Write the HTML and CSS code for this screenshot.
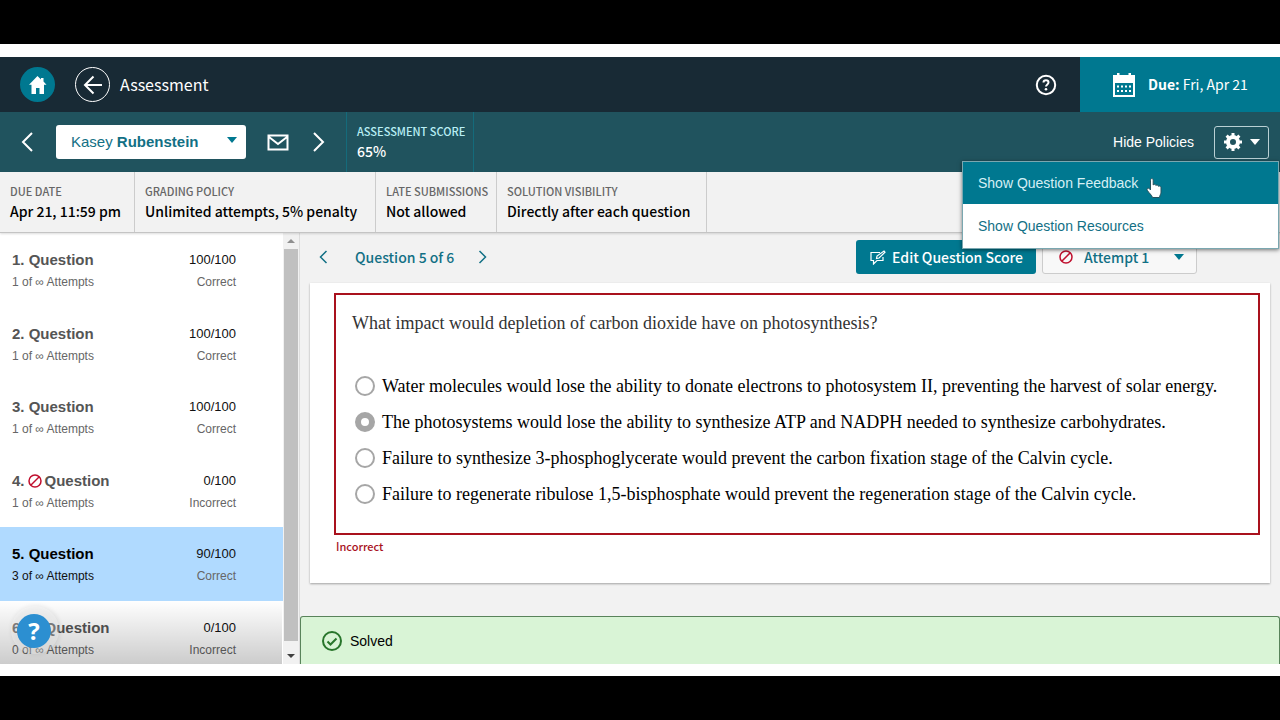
FILE: index.html
```html
<!DOCTYPE html>
<html lang="en">
  <head>
    <meta charset="UTF-8">
    <meta name="viewport" content="width=device-width">
    <title>Assessment</title>
    <link rel="stylesheet" href="styles.css">
  </head>
  <body>
    <div class="app">
      <header class="top">
        <a href="#" class="home" aria-label="Home"><svg width="20" height="20" viewBox="0 0 20 20"><path fill="#fff" d="M9.500 1 1 9.800h2.500V19H8v-6h3.500v6H16V9.800h2.500L15.500 6.500V3H13v1.400z"/></svg></a>
        <a href="#" class="back" aria-label="Back"><svg width="20" height="20" viewBox="0 0 20 20"><path class="line" d="M19 10H2M10.500 1.500 2 10l8.500 8.500"/></svg></a>
        <h1>Assessment</h1>
        <button class="icon help" aria-label="Help"><svg width="22" height="22" viewBox="0 0 22 22"><circle class="line" cx="11" cy="11" r="9.200"/><path class="line" d="M8.500 8.600c0-3.100 5-3.100 5 0 0 1.800-2.500 1.900-2.500 4"/><circle fill="#fff" cx="11" cy="15.300" r="1.300"/></svg></button>
        <div class="due">
          <svg width="22" height="24" viewBox="0 0 22 24"><path fill="#fff" d="M4 0h2.500v2h9V0H18v2h4v22H0V2h4z"/><path fill="#007890" d="M2 10h18v12H2z"/><path stroke="#fff" stroke-width="2" stroke-dasharray="2 2" d="M4 13.500h14M4 18h14"/></svg>
          <span><b>Due:</b> Fri, Apr 21</span>
        </div>
      </header>
      <div class="student">
        <button class="icon prev" aria-label="Previous student"><svg width="14" height="22" viewBox="0 0 14 22"><path class="line" d="M11 2 2 11l9 9"/></svg></button>
        <label class="pick who">
          <select aria-label="Student"><option>Kasey Rubenstein</option></select>
          <span>Kasey <b>Rubenstein</b></span>
        </label>
        <button class="icon mail" aria-label="Email student"><svg width="22" height="17" viewBox="0 0 22 17"><path class="line" d="M1.500 1.500h19v14h-19zM2 3l9 7 9-7"/></svg></button>
        <button class="icon next" aria-label="Next student"><svg width="14" height="22" viewBox="0 0 14 22"><path class="line" d="m2 2 9 9-9 9"/></svg></button>
        <div class="score"><h2>ASSESSMENT SCORE</h2><p>65%</p></div>
        <button class="icon hide">Hide Policies</button>
        <div class="settings">
          <button class="gear" aria-label="Settings" aria-expanded="true"><svg width="18" height="18" viewBox="0 0 18 18"><circle cx="9" cy="9" r="5" fill="none" stroke="#fff" stroke-width="4"/><path stroke="#fff" stroke-width="3" d="M9 0v3M9 15v3M0 9h3M15 9h3M2.600 2.600l2 2M13.400 13.400l2 2M2.600 15.400l2-2M13.400 4.600l2-2"/></svg><svg width="10" height="6" viewBox="0 0 10 6"><path fill="#fff" d="M0 0h10L5 6z"/></svg></button>
          <div class="menu" role="menu">
            <button role="menuitem" class="on">Show Question Feedback</button>
            <button role="menuitem">Show Question Resources</button>
            <svg class="hand" width="16" height="21" viewBox="0 0 16 21"><path fill="#fff" stroke="#27515c" stroke-width="1" d="M4.500 12V2.200c0-2.200 2.700-2.200 2.700 0V7c.6-1 2.400-.9 2.700.5.8-.8 2.300-.5 2.500.8 1-.7 2.600-.1 2.600 1.400v4.500c0 1.800-1.200 2.900-1.500 5.300H6.500c-.6-2.500-3.500-4.300-5.300-7.300-1-1.700 1.300-2.700 2.300-1.500z"/></svg>
          </div>
        </div>
      </div>
      <dl class="policies">
        <div><dt>DUE DATE</dt><dd>Apr 21, 11:59 pm</dd></div>
        <div><dt>GRADING POLICY</dt><dd>Unlimited attempts, 5% penalty</dd></div>
        <div><dt>LATE SUBMISSIONS</dt><dd>Not allowed</dd></div>
        <div><dt>SOLUTION VISIBILITY</dt><dd>Directly after each question</dd></div>
      </dl>
      <div class="work">
        <nav class="side">
          <ol class="list">
            <li><a href="#"><b>1. Question</b><span>100/100</span><small>1 of ∞ Attempts</small><small>Correct</small></a></li>
            <li><a href="#"><b>2. Question</b><span>100/100</span><small>1 of ∞ Attempts</small><small>Correct</small></a></li>
            <li><a href="#"><b>3. Question</b><span>100/100</span><small>1 of ∞ Attempts</small><small>Correct</small></a></li>
            <li><a href="#"><b>4. <svg class="no" width="14" height="14" viewBox="0 0 14 14"><circle cx="7" cy="7" r="6"/><path d="m3 11 8-8"/></svg> Question</b><span>0/100</span><small>1 of ∞ Attempts</small><small>Incorrect</small></a></li>
            <li class="current"><a href="#"><b>5. Question</b><span>90/100</span><small>3 of ∞ Attempts</small><small>Correct</small></a></li>
            <li><a href="#"><b>6. <svg class="no" width="14" height="14" viewBox="0 0 14 14"><circle cx="7" cy="7" r="6"/><path d="m3 11 8-8"/></svg> Question</b><span>0/100</span><small>0 of ∞ Attempts</small><small>Incorrect</small></a></li>
          </ol>
          <div class="bar">
            <svg width="8" height="4" viewBox="0 0 8 4"><path fill="#8f8f8f" d="M0 4h8L4 0z"/></svg>
            <i></i>
            <svg width="8" height="4" viewBox="0 0 8 4"><path fill="#404040" d="M0 0h8L4 4z"/></svg>
          </div>
          <button class="support" aria-label="Support">?</button>
        </nav>
        <main>
          <div class="tools">
            <button class="icon" aria-label="Previous question"><svg width="9" height="14" viewBox="0 0 9 14"><path class="line" d="M7.500 1 1.500 7l6 6"/></svg></button>
            <h2>Question 5 of 6</h2>
            <button class="icon" aria-label="Next question"><svg width="9" height="14" viewBox="0 0 9 14"><path class="line" d="m1.500 1 6 6-6 6"/></svg></button>
            <button class="edit"><svg width="16" height="15" viewBox="0 0 16 15"><path class="line" d="M10 2.500H1v8h2.500V14l3.500-3.500h6V7M6.500 8.500l.5-2.500 7-5 1 1.300-6 5.700z"/></svg>Edit Question Score</button>
            <label class="pick attempt">
              <select aria-label="Attempt"><option>Attempt 1</option></select>
              <svg class="no" width="14" height="14" viewBox="0 0 14 14"><circle cx="7" cy="7" r="6"/><path d="m3 11 8-8"/></svg>
            </label>
          </div>
          <section class="card">
            <fieldset>
              <p>What impact would depletion of carbon dioxide have on photosynthesis?</p>
              <label><input type="radio" name="a">Water molecules would lose the ability to donate electrons to photosystem II, preventing the harvest of solar energy.</label>
              <label><input type="radio" name="a" checked>The photosystems would lose the ability to synthesize ATP and NADPH needed to synthesize carbohydrates.</label>
              <label><input type="radio" name="a">Failure to synthesize 3-phosphoglycerate would prevent the carbon fixation stage of the Calvin cycle.</label>
              <label><input type="radio" name="a">Failure to regenerate ribulose 1,5-bisphosphate would prevent the regeneration stage of the Calvin cycle.</label>
            </fieldset>
            <p class="result">Incorrect</p>
          </section>
          <div class="solved"><svg width="20" height="20" viewBox="0 0 20 20"><circle cx="10" cy="10" r="9"/><path d="m5.500 10.500 3 3 6-6"/></svg>Solved</div>
        </main>
      </div>
    </div>
  </body>
</html>
```
FILE: styles.css
```css
* {box-sizing: border-box;}
body {color: #000; background: #000; margin: 0; height: 100vh;
  padding: 44px 0; font: 14px/20px 'Noto Sans CJK SC', sans-serif;}
h1, h2, p, dl, dd, ol {margin: 0; padding: 0; font-weight: 400;}
a {text-decoration: none; color: inherit;}
svg {display: block; flex: none;}
button, select {font: inherit; cursor: pointer;}
button {border: 0; padding: 0;}
.line {fill: none; stroke: currentColor; stroke-width: 2;}
.icon {color: inherit; background: none; display: flex;}
.app {background: #fff; height: 100%; padding: 13px 0 12px;
  display: flex; flex-flow: column;}

.top {color: #fff; background: #182a35; height: 55px; flex: none;
  padding-left: 20px; display: flex; align-items: center;}
.home, .back {width: 35px; height: 35px; border-radius: 50%;
  display: flex; align-items: center; justify-content: center;}
.home {background: #007890;}
.back {border: 1px solid #fff; margin: 0 10px 0 20px;}
h1 {font-size: 16px; padding-bottom: 2px;}
.help {margin: 0 23px 0 auto;}
.due {background: #007890; width: 200px; align-self: stretch;
  padding-left: 33px; display: flex; align-items: center; gap: 13px;}
.due span {padding-bottom: 2px;}

.student {color: #fff; background: #20535e; height: 60px; flex: none;
  padding: 0 11px 0 21px; display: flex; align-items: center;}
.pick {display: grid; align-items: center;}
.pick > * {grid-area: 1 / 1;}
.pick select {appearance: none; border-radius: 3px; height: 34px;}
.pick::after {content: ''; grid-area: 1 / 1; justify-self: end;
  border: 5px solid #0000; border-top: 6px solid #007890; border-bottom: 0;
  pointer-events: none;}
.who {width: 190px; margin: 0 21px;
  font: 15px/20px 'Liberation Sans', sans-serif;}
.who select {color: #0000; background: #fff; border: 0; width: 100%;}
.who span {color: #127085; padding-left: 15px; pointer-events: none;}
.who::after {margin: 0 9px 4px;}
.next {margin: 0 20px 0 23px;}
.score {border: solid #146b7b; border-width: 0 1px; align-self: stretch;
  padding: 9px 8px 9px 10px;}
.score h2 {color: #b9eff5; font-size: 11px; font-weight: 500;}
.score p {font-weight: 500;}
.hide {margin: 0 20px 0 auto; font: 14px/20px 'Liberation Sans', sans-serif;}
.settings {position: relative;}
.gear {background: none; width: 55px; height: 33px;
  border: 1px solid #bad0d4; border-radius: 3px;
  display: flex; align-items: center; justify-content: center; gap: 8px;}
.menu {position: absolute; top: 35px; right: -10px; z-index: 2; width: 317px;
  background: #fff; border: 1px solid #7aa7b0; box-shadow: 0 1px 4px #0008;}
.menu button {color: #127085; background: #fff; display: block; width: 100%;
  padding: 11px 15px; text-align: left;
  font: 14px/22px 'Liberation Sans', sans-serif;}
.menu .on {color: #d5eff5; background: #007890; padding-block: 10px;}
.hand {position: absolute; left: 183px; top: 16px; pointer-events: none;}

.policies {background: #f2f2f2; border-bottom: 1px solid #c4c4c4; height: 61px;
  flex: none; display: grid; grid-template-columns: 135px 241px 121px 210px;
  box-shadow: 0 1px 2px #0002; z-index: 1;}
.policies div {border-right: 1px solid #ccc; padding: 9px 0 0 10px;}
dt {color: #666; font-size: 11px; font-weight: 500;}
dd {font-weight: 500;}

.work {flex: 1; min-height: 0; display: flex;}
.side {width: 300px; flex: none; display: flex; position: relative;
  border-right: 1px solid #ddd; overflow: hidden;
  font: 15px/20px 'Liberation Sans', sans-serif;}
.list {flex: 1; list-style: none;}
.side::after {content: ''; position: absolute; inset: auto 17px 0 0;
  height: 64px; background: linear-gradient(#0000, #0003);
  pointer-events: none;}
.list a {color: #555; height: 73px; padding: 17px 47px 0 12px;
  display: grid; grid-template-columns: 1fr auto; align-content: start;
  row-gap: 2px;}
.list li:nth-child(odd) a {height: 74px;}
.list b {display: flex; gap: 3px; align-items: center;}
.list span {color: #111; font-size: 13px; text-align: right;}
.list small {color: #666; font-size: 12px;}
.list small:last-child {text-align: right;}
.list .current a {color: #000; background: #b0daff;}
.current small:nth-child(3) {color: #111;}
.no {fill: none; stroke: #c00f2e; stroke-width: 1.5;}
.bar {background: #f1f1f1; width: 16px; padding: 6px 1px;
  display: flex; flex-flow: column; align-items: center; gap: 6px;}
.bar i {flex: 1; width: 14px; background: #c0c0c0; margin-bottom: 7px;}
.support {color: #fff; background: #2c8fd1; width: 34px; height: 34px;
  border-radius: 50%; position: absolute; left: 17px; bottom: 16px; z-index: 1;
  font: 700 24px/34px 'Open Sans', sans-serif;
  box-shadow: 1px -1px 0 7px #fff4, 2px -1px 4px 8px #0001;}

main {background: #f2f2f2; flex: 1; min-width: 0;
  display: flex; flex-flow: column;}
.tools {color: #127085; padding: 7px 83px 9px 19px;
  display: flex; align-items: center; flex: none;}
.tools h2 {font-size: 14px; font-weight: 500; margin: 0 24px 0 27px;}
.tools .line {stroke-width: 1.5;}
.edit {color: #fff; background: #007890; height: 34px; border-radius: 3px;
  margin: 0 6px 0 auto; padding: 0 13px 0 14px; font-weight: 500;
  display: flex; align-items: center; gap: 6px;}
.tools .edit .line {stroke-width: 1.2;}
.attempt {width: 155px;}
.attempt select {color: #127085; background: #f8f8f8; width: 100%;
  border: 1px solid #ccc; padding: 0 41px; font-weight: 500;}
.attempt svg {margin-left: 17px; pointer-events: none;}
.attempt::after {margin-right: 13px;}
.card {background: #fff; margin: 0 10px; padding: 10px 10px 27px 24px;
  box-shadow: 0 1px 2px #0005; flex: none;}
fieldset {border: 2px solid #a9111d; margin: 0; padding: 16px 16px 21px;
  font: 18px/24px 'Liberation Serif', serif;}
fieldset p {color: #333; margin-bottom: 33px;}
fieldset label {display: flex; align-items: center; gap: 7px; height: 36px;}
input {appearance: none; width: 20px; height: 20px; margin: 0 0 0 3px;
  border: 2px solid #a6a6a6; border-radius: 50%; flex: none;}
input:checked {border-width: 6px;}
.result {color: #a9111d; font-size: 11px; font-weight: 500; margin: 1px 2px 0;}
.solved {background: #d9f4d6; border: 1px solid #59835b; border-bottom: 0;
  border-radius: 3px 3px 0 0; height: 48px; flex: none; margin-top: auto;
  padding-left: 21px; display: flex; align-items: center; gap: 8px;
  font: 14px/20px 'Liberation Sans', sans-serif;}
.solved svg {fill: none; stroke: #28752b; stroke-width: 2;}
```
